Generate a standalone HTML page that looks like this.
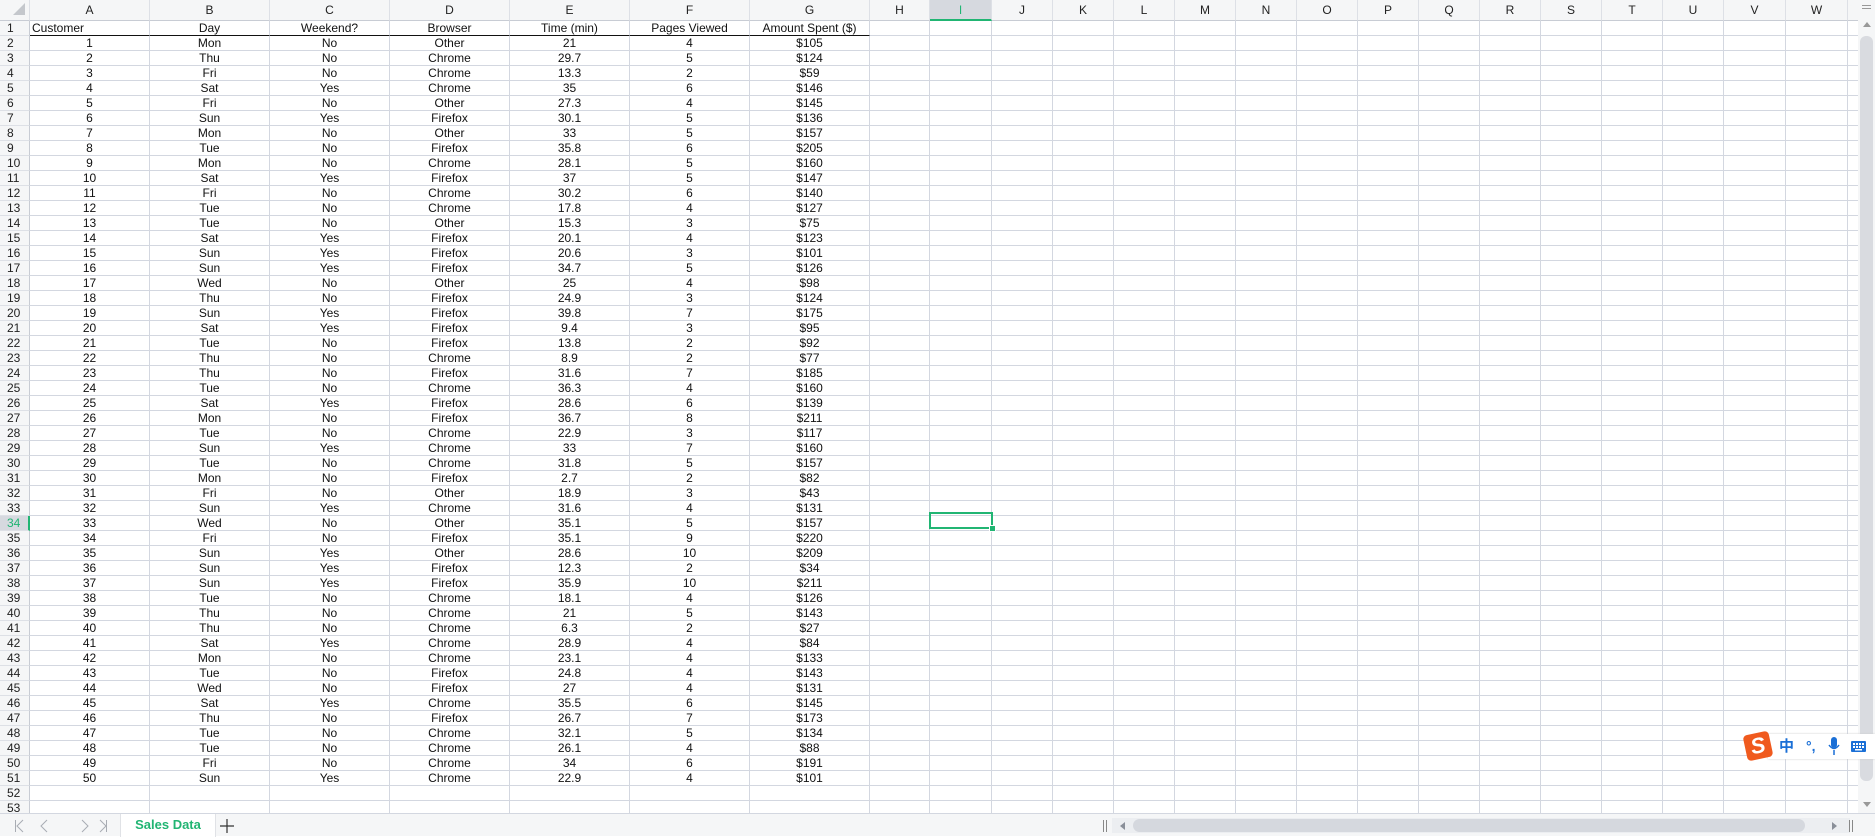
<!DOCTYPE html>
<html><head><meta charset="utf-8"><style>
*{margin:0;padding:0;box-sizing:border-box}
body{width:1875px;height:836px;overflow:hidden;background:#fff;font-family:"Liberation Sans",Arial,sans-serif;font-size:12px;color:#111;position:relative}
table{position:absolute;left:0;top:0;border-collapse:separate;border-spacing:0;table-layout:fixed;width:1858px}
td{height:15px;line-height:14px;border-right:1px solid #d3d7e0;border-bottom:1px solid #d3d7e0;text-align:center;white-space:nowrap;overflow:hidden;padding:0}
tr.h td{height:17px;line-height:16px;background:#f5f6f7;border-right:1px solid #dde0e6;border-bottom:1px solid #c8ccd4;color:#222}
td.r{background:#f5f6f7;text-align:left;padding-left:7px;border-right:1px solid #c8ccd4;border-bottom:1px solid #dde0e6;color:#222}
tr.one td{border-bottom:1px solid #111}
tr.one td.r,tr.one td.e{border-bottom:1px solid #d3d7e0}
tr.one td.r{border-bottom:1px solid #dde0e6}
td.l{text-align:left;padding-left:2px}
.sel{position:absolute;left:929px;top:512px;width:64px;height:17px;border:2px solid #21b573}
.sel:after{content:"";position:absolute;right:-5px;bottom:-5px;width:5px;height:5px;background:#21b573;border:1px solid #fff}
.tabbar{position:absolute;left:0;top:813px;width:1875px;height:23px;background:#f5f6f7;border-top:1px solid #d3d7e0}
.vs{position:absolute;left:1858px;top:0;width:17px;height:813px;background:#f5f6f7}
</style></head><body>
<table>
<colgroup><col style="width:30px"><col style="width:120px"><col style="width:120px"><col style="width:120px"><col style="width:120px"><col style="width:120px"><col style="width:120px"><col style="width:120px"><col style="width:60px"><col style="width:62px"><col style="width:61px"><col style="width:61px"><col style="width:61px"><col style="width:61px"><col style="width:61px"><col style="width:61px"><col style="width:61px"><col style="width:61px"><col style="width:61px"><col style="width:61px"><col style="width:61px"><col style="width:61px"><col style="width:62px"><col style="width:62px"><col style="width:12px"></colgroup>
<tr class="h"><td style="background:#f5f6f7"><svg width="14" height="14" style="margin:2px 0 0 8px"><path d="M13 1V13H1Z" fill="#c4c7cc"/></svg></td><td>A</td><td>B</td><td>C</td><td>D</td><td>E</td><td>F</td><td>G</td><td>H</td><td style="background:#d6d9df;color:#21b573;border-bottom:2px solid #21b573">I</td><td>J</td><td>K</td><td>L</td><td>M</td><td>N</td><td>O</td><td>P</td><td>Q</td><td>R</td><td>S</td><td>T</td><td>U</td><td>V</td><td>W</td><td></td></tr>
<tr class="one"><td class="r">1</td><td class="l">Customer</td><td>Day</td><td>Weekend?</td><td>Browser</td><td>Time (min)</td><td>Pages Viewed</td><td>Amount Spent ($)</td><td class="e"></td><td class="e"></td><td class="e"></td><td class="e"></td><td class="e"></td><td class="e"></td><td class="e"></td><td class="e"></td><td class="e"></td><td class="e"></td><td class="e"></td><td class="e"></td><td class="e"></td><td class="e"></td><td class="e"></td><td class="e"></td><td class="e"></td></tr>
<tr><td class="r">2</td><td>1</td><td>Mon</td><td>No</td><td>Other</td><td>21</td><td>4</td><td>$105</td><td></td><td></td><td></td><td></td><td></td><td></td><td></td><td></td><td></td><td></td><td></td><td></td><td></td><td></td><td></td><td></td><td></td></tr>
<tr><td class="r">3</td><td>2</td><td>Thu</td><td>No</td><td>Chrome</td><td>29.7</td><td>5</td><td>$124</td><td></td><td></td><td></td><td></td><td></td><td></td><td></td><td></td><td></td><td></td><td></td><td></td><td></td><td></td><td></td><td></td><td></td></tr>
<tr><td class="r">4</td><td>3</td><td>Fri</td><td>No</td><td>Chrome</td><td>13.3</td><td>2</td><td>$59</td><td></td><td></td><td></td><td></td><td></td><td></td><td></td><td></td><td></td><td></td><td></td><td></td><td></td><td></td><td></td><td></td><td></td></tr>
<tr><td class="r">5</td><td>4</td><td>Sat</td><td>Yes</td><td>Chrome</td><td>35</td><td>6</td><td>$146</td><td></td><td></td><td></td><td></td><td></td><td></td><td></td><td></td><td></td><td></td><td></td><td></td><td></td><td></td><td></td><td></td><td></td></tr>
<tr><td class="r">6</td><td>5</td><td>Fri</td><td>No</td><td>Other</td><td>27.3</td><td>4</td><td>$145</td><td></td><td></td><td></td><td></td><td></td><td></td><td></td><td></td><td></td><td></td><td></td><td></td><td></td><td></td><td></td><td></td><td></td></tr>
<tr><td class="r">7</td><td>6</td><td>Sun</td><td>Yes</td><td>Firefox</td><td>30.1</td><td>5</td><td>$136</td><td></td><td></td><td></td><td></td><td></td><td></td><td></td><td></td><td></td><td></td><td></td><td></td><td></td><td></td><td></td><td></td><td></td></tr>
<tr><td class="r">8</td><td>7</td><td>Mon</td><td>No</td><td>Other</td><td>33</td><td>5</td><td>$157</td><td></td><td></td><td></td><td></td><td></td><td></td><td></td><td></td><td></td><td></td><td></td><td></td><td></td><td></td><td></td><td></td><td></td></tr>
<tr><td class="r">9</td><td>8</td><td>Tue</td><td>No</td><td>Firefox</td><td>35.8</td><td>6</td><td>$205</td><td></td><td></td><td></td><td></td><td></td><td></td><td></td><td></td><td></td><td></td><td></td><td></td><td></td><td></td><td></td><td></td><td></td></tr>
<tr><td class="r">10</td><td>9</td><td>Mon</td><td>No</td><td>Chrome</td><td>28.1</td><td>5</td><td>$160</td><td></td><td></td><td></td><td></td><td></td><td></td><td></td><td></td><td></td><td></td><td></td><td></td><td></td><td></td><td></td><td></td><td></td></tr>
<tr><td class="r">11</td><td>10</td><td>Sat</td><td>Yes</td><td>Firefox</td><td>37</td><td>5</td><td>$147</td><td></td><td></td><td></td><td></td><td></td><td></td><td></td><td></td><td></td><td></td><td></td><td></td><td></td><td></td><td></td><td></td><td></td></tr>
<tr><td class="r">12</td><td>11</td><td>Fri</td><td>No</td><td>Chrome</td><td>30.2</td><td>6</td><td>$140</td><td></td><td></td><td></td><td></td><td></td><td></td><td></td><td></td><td></td><td></td><td></td><td></td><td></td><td></td><td></td><td></td><td></td></tr>
<tr><td class="r">13</td><td>12</td><td>Tue</td><td>No</td><td>Chrome</td><td>17.8</td><td>4</td><td>$127</td><td></td><td></td><td></td><td></td><td></td><td></td><td></td><td></td><td></td><td></td><td></td><td></td><td></td><td></td><td></td><td></td><td></td></tr>
<tr><td class="r">14</td><td>13</td><td>Tue</td><td>No</td><td>Other</td><td>15.3</td><td>3</td><td>$75</td><td></td><td></td><td></td><td></td><td></td><td></td><td></td><td></td><td></td><td></td><td></td><td></td><td></td><td></td><td></td><td></td><td></td></tr>
<tr><td class="r">15</td><td>14</td><td>Sat</td><td>Yes</td><td>Firefox</td><td>20.1</td><td>4</td><td>$123</td><td></td><td></td><td></td><td></td><td></td><td></td><td></td><td></td><td></td><td></td><td></td><td></td><td></td><td></td><td></td><td></td><td></td></tr>
<tr><td class="r">16</td><td>15</td><td>Sun</td><td>Yes</td><td>Firefox</td><td>20.6</td><td>3</td><td>$101</td><td></td><td></td><td></td><td></td><td></td><td></td><td></td><td></td><td></td><td></td><td></td><td></td><td></td><td></td><td></td><td></td><td></td></tr>
<tr><td class="r">17</td><td>16</td><td>Sun</td><td>Yes</td><td>Firefox</td><td>34.7</td><td>5</td><td>$126</td><td></td><td></td><td></td><td></td><td></td><td></td><td></td><td></td><td></td><td></td><td></td><td></td><td></td><td></td><td></td><td></td><td></td></tr>
<tr><td class="r">18</td><td>17</td><td>Wed</td><td>No</td><td>Other</td><td>25</td><td>4</td><td>$98</td><td></td><td></td><td></td><td></td><td></td><td></td><td></td><td></td><td></td><td></td><td></td><td></td><td></td><td></td><td></td><td></td><td></td></tr>
<tr><td class="r">19</td><td>18</td><td>Thu</td><td>No</td><td>Firefox</td><td>24.9</td><td>3</td><td>$124</td><td></td><td></td><td></td><td></td><td></td><td></td><td></td><td></td><td></td><td></td><td></td><td></td><td></td><td></td><td></td><td></td><td></td></tr>
<tr><td class="r">20</td><td>19</td><td>Sun</td><td>Yes</td><td>Firefox</td><td>39.8</td><td>7</td><td>$175</td><td></td><td></td><td></td><td></td><td></td><td></td><td></td><td></td><td></td><td></td><td></td><td></td><td></td><td></td><td></td><td></td><td></td></tr>
<tr><td class="r">21</td><td>20</td><td>Sat</td><td>Yes</td><td>Firefox</td><td>9.4</td><td>3</td><td>$95</td><td></td><td></td><td></td><td></td><td></td><td></td><td></td><td></td><td></td><td></td><td></td><td></td><td></td><td></td><td></td><td></td><td></td></tr>
<tr><td class="r">22</td><td>21</td><td>Tue</td><td>No</td><td>Firefox</td><td>13.8</td><td>2</td><td>$92</td><td></td><td></td><td></td><td></td><td></td><td></td><td></td><td></td><td></td><td></td><td></td><td></td><td></td><td></td><td></td><td></td><td></td></tr>
<tr><td class="r">23</td><td>22</td><td>Thu</td><td>No</td><td>Chrome</td><td>8.9</td><td>2</td><td>$77</td><td></td><td></td><td></td><td></td><td></td><td></td><td></td><td></td><td></td><td></td><td></td><td></td><td></td><td></td><td></td><td></td><td></td></tr>
<tr><td class="r">24</td><td>23</td><td>Thu</td><td>No</td><td>Firefox</td><td>31.6</td><td>7</td><td>$185</td><td></td><td></td><td></td><td></td><td></td><td></td><td></td><td></td><td></td><td></td><td></td><td></td><td></td><td></td><td></td><td></td><td></td></tr>
<tr><td class="r">25</td><td>24</td><td>Tue</td><td>No</td><td>Chrome</td><td>36.3</td><td>4</td><td>$160</td><td></td><td></td><td></td><td></td><td></td><td></td><td></td><td></td><td></td><td></td><td></td><td></td><td></td><td></td><td></td><td></td><td></td></tr>
<tr><td class="r">26</td><td>25</td><td>Sat</td><td>Yes</td><td>Firefox</td><td>28.6</td><td>6</td><td>$139</td><td></td><td></td><td></td><td></td><td></td><td></td><td></td><td></td><td></td><td></td><td></td><td></td><td></td><td></td><td></td><td></td><td></td></tr>
<tr><td class="r">27</td><td>26</td><td>Mon</td><td>No</td><td>Firefox</td><td>36.7</td><td>8</td><td>$211</td><td></td><td></td><td></td><td></td><td></td><td></td><td></td><td></td><td></td><td></td><td></td><td></td><td></td><td></td><td></td><td></td><td></td></tr>
<tr><td class="r">28</td><td>27</td><td>Tue</td><td>No</td><td>Chrome</td><td>22.9</td><td>3</td><td>$117</td><td></td><td></td><td></td><td></td><td></td><td></td><td></td><td></td><td></td><td></td><td></td><td></td><td></td><td></td><td></td><td></td><td></td></tr>
<tr><td class="r">29</td><td>28</td><td>Sun</td><td>Yes</td><td>Chrome</td><td>33</td><td>7</td><td>$160</td><td></td><td></td><td></td><td></td><td></td><td></td><td></td><td></td><td></td><td></td><td></td><td></td><td></td><td></td><td></td><td></td><td></td></tr>
<tr><td class="r">30</td><td>29</td><td>Tue</td><td>No</td><td>Chrome</td><td>31.8</td><td>5</td><td>$157</td><td></td><td></td><td></td><td></td><td></td><td></td><td></td><td></td><td></td><td></td><td></td><td></td><td></td><td></td><td></td><td></td><td></td></tr>
<tr><td class="r">31</td><td>30</td><td>Mon</td><td>No</td><td>Firefox</td><td>2.7</td><td>2</td><td>$82</td><td></td><td></td><td></td><td></td><td></td><td></td><td></td><td></td><td></td><td></td><td></td><td></td><td></td><td></td><td></td><td></td><td></td></tr>
<tr><td class="r">32</td><td>31</td><td>Fri</td><td>No</td><td>Other</td><td>18.9</td><td>3</td><td>$43</td><td></td><td></td><td></td><td></td><td></td><td></td><td></td><td></td><td></td><td></td><td></td><td></td><td></td><td></td><td></td><td></td><td></td></tr>
<tr><td class="r">33</td><td>32</td><td>Sun</td><td>Yes</td><td>Chrome</td><td>31.6</td><td>4</td><td>$131</td><td></td><td></td><td></td><td></td><td></td><td></td><td></td><td></td><td></td><td></td><td></td><td></td><td></td><td></td><td></td><td></td><td></td></tr>
<tr><td class="r" style="background:#d6d9df;color:#21b573;border-right:2px solid #21b573">34</td><td>33</td><td>Wed</td><td>No</td><td>Other</td><td>35.1</td><td>5</td><td>$157</td><td></td><td></td><td></td><td></td><td></td><td></td><td></td><td></td><td></td><td></td><td></td><td></td><td></td><td></td><td></td><td></td><td></td></tr>
<tr><td class="r">35</td><td>34</td><td>Fri</td><td>No</td><td>Firefox</td><td>35.1</td><td>9</td><td>$220</td><td></td><td></td><td></td><td></td><td></td><td></td><td></td><td></td><td></td><td></td><td></td><td></td><td></td><td></td><td></td><td></td><td></td></tr>
<tr><td class="r">36</td><td>35</td><td>Sun</td><td>Yes</td><td>Other</td><td>28.6</td><td>10</td><td>$209</td><td></td><td></td><td></td><td></td><td></td><td></td><td></td><td></td><td></td><td></td><td></td><td></td><td></td><td></td><td></td><td></td><td></td></tr>
<tr><td class="r">37</td><td>36</td><td>Sun</td><td>Yes</td><td>Firefox</td><td>12.3</td><td>2</td><td>$34</td><td></td><td></td><td></td><td></td><td></td><td></td><td></td><td></td><td></td><td></td><td></td><td></td><td></td><td></td><td></td><td></td><td></td></tr>
<tr><td class="r">38</td><td>37</td><td>Sun</td><td>Yes</td><td>Firefox</td><td>35.9</td><td>10</td><td>$211</td><td></td><td></td><td></td><td></td><td></td><td></td><td></td><td></td><td></td><td></td><td></td><td></td><td></td><td></td><td></td><td></td><td></td></tr>
<tr><td class="r">39</td><td>38</td><td>Tue</td><td>No</td><td>Chrome</td><td>18.1</td><td>4</td><td>$126</td><td></td><td></td><td></td><td></td><td></td><td></td><td></td><td></td><td></td><td></td><td></td><td></td><td></td><td></td><td></td><td></td><td></td></tr>
<tr><td class="r">40</td><td>39</td><td>Thu</td><td>No</td><td>Chrome</td><td>21</td><td>5</td><td>$143</td><td></td><td></td><td></td><td></td><td></td><td></td><td></td><td></td><td></td><td></td><td></td><td></td><td></td><td></td><td></td><td></td><td></td></tr>
<tr><td class="r">41</td><td>40</td><td>Thu</td><td>No</td><td>Chrome</td><td>6.3</td><td>2</td><td>$27</td><td></td><td></td><td></td><td></td><td></td><td></td><td></td><td></td><td></td><td></td><td></td><td></td><td></td><td></td><td></td><td></td><td></td></tr>
<tr><td class="r">42</td><td>41</td><td>Sat</td><td>Yes</td><td>Chrome</td><td>28.9</td><td>4</td><td>$84</td><td></td><td></td><td></td><td></td><td></td><td></td><td></td><td></td><td></td><td></td><td></td><td></td><td></td><td></td><td></td><td></td><td></td></tr>
<tr><td class="r">43</td><td>42</td><td>Mon</td><td>No</td><td>Chrome</td><td>23.1</td><td>4</td><td>$133</td><td></td><td></td><td></td><td></td><td></td><td></td><td></td><td></td><td></td><td></td><td></td><td></td><td></td><td></td><td></td><td></td><td></td></tr>
<tr><td class="r">44</td><td>43</td><td>Tue</td><td>No</td><td>Firefox</td><td>24.8</td><td>4</td><td>$143</td><td></td><td></td><td></td><td></td><td></td><td></td><td></td><td></td><td></td><td></td><td></td><td></td><td></td><td></td><td></td><td></td><td></td></tr>
<tr><td class="r">45</td><td>44</td><td>Wed</td><td>No</td><td>Firefox</td><td>27</td><td>4</td><td>$131</td><td></td><td></td><td></td><td></td><td></td><td></td><td></td><td></td><td></td><td></td><td></td><td></td><td></td><td></td><td></td><td></td><td></td></tr>
<tr><td class="r">46</td><td>45</td><td>Sat</td><td>Yes</td><td>Chrome</td><td>35.5</td><td>6</td><td>$145</td><td></td><td></td><td></td><td></td><td></td><td></td><td></td><td></td><td></td><td></td><td></td><td></td><td></td><td></td><td></td><td></td><td></td></tr>
<tr><td class="r">47</td><td>46</td><td>Thu</td><td>No</td><td>Firefox</td><td>26.7</td><td>7</td><td>$173</td><td></td><td></td><td></td><td></td><td></td><td></td><td></td><td></td><td></td><td></td><td></td><td></td><td></td><td></td><td></td><td></td><td></td></tr>
<tr><td class="r">48</td><td>47</td><td>Tue</td><td>No</td><td>Chrome</td><td>32.1</td><td>5</td><td>$134</td><td></td><td></td><td></td><td></td><td></td><td></td><td></td><td></td><td></td><td></td><td></td><td></td><td></td><td></td><td></td><td></td><td></td></tr>
<tr><td class="r">49</td><td>48</td><td>Tue</td><td>No</td><td>Chrome</td><td>26.1</td><td>4</td><td>$88</td><td></td><td></td><td></td><td></td><td></td><td></td><td></td><td></td><td></td><td></td><td></td><td></td><td></td><td></td><td></td><td></td><td></td></tr>
<tr><td class="r">50</td><td>49</td><td>Fri</td><td>No</td><td>Chrome</td><td>34</td><td>6</td><td>$191</td><td></td><td></td><td></td><td></td><td></td><td></td><td></td><td></td><td></td><td></td><td></td><td></td><td></td><td></td><td></td><td></td><td></td></tr>
<tr><td class="r">51</td><td>50</td><td>Sun</td><td>Yes</td><td>Chrome</td><td>22.9</td><td>4</td><td>$101</td><td></td><td></td><td></td><td></td><td></td><td></td><td></td><td></td><td></td><td></td><td></td><td></td><td></td><td></td><td></td><td></td><td></td></tr>
<tr><td class="r">52</td><td></td><td></td><td></td><td></td><td></td><td></td><td></td><td></td><td></td><td></td><td></td><td></td><td></td><td></td><td></td><td></td><td></td><td></td><td></td><td></td><td></td><td></td><td></td><td></td></tr>
<tr><td class="r">53</td><td></td><td></td><td></td><td></td><td></td><td></td><td></td><td></td><td></td><td></td><td></td><td></td><td></td><td></td><td></td><td></td><td></td><td></td><td></td><td></td><td></td><td></td><td></td><td></td></tr>
</table>
<div class="sel"></div>
<div class="vs">
<div style="position:absolute;left:4px;top:5px;width:9px;height:1px;background:#999"></div>
<div style="position:absolute;left:4px;top:8px;width:9px;height:1px;background:#999"></div>
<svg style="position:absolute;left:5px;top:22px" width="8" height="5"><path d="M0 5L4 0L8 5Z" fill="#999"/></svg>
<div style="position:absolute;left:2px;top:36px;width:13px;height:745px;background:#d9dbe0;border-radius:6px"></div>
<svg style="position:absolute;left:5px;top:802px" width="8" height="5"><path d="M0 0L4 5L8 0Z" fill="#999"/></svg>
</div>
<div class="tabbar">
<svg style="position:absolute;left:14px;top:5px" width="95" height="14" stroke="#a8acb3" stroke-width="1" fill="none"><path d="M1.5 1V13M9 1L3 7L9 13"/><path d="M33 1L27 7L33 13"/><path d="M68 1L74 7L68 13"/><path d="M92.5 1V13M86 1L92 7L86 13"/></svg>
<div style="position:absolute;left:120px;top:0;width:96px;height:23px;background:#fff;border-left:1px solid #e0e2e6;border-right:1px solid #e0e2e6;color:#21b573;font-weight:bold;font-size:13px;line-height:22px;text-align:center">Sales Data</div>
<svg style="position:absolute;left:220px;top:5px" width="14" height="14" stroke="#333" stroke-width="1.2"><path d="M7 0V14M0 7H14"/></svg>
<div style="position:absolute;left:1103px;top:6px;width:1px;height:12px;background:#888"></div>
<div style="position:absolute;left:1106px;top:6px;width:1px;height:12px;background:#888"></div>
<div style="position:absolute;left:1112px;top:4px;width:738px;height:15px;background:#eceef1"></div>
<svg style="position:absolute;left:1120px;top:8px" width="5" height="8"><path d="M5 0L0 4L5 8Z" fill="#8a8f99"/></svg>
<div style="position:absolute;left:1133px;top:5px;width:672px;height:13px;background:#d5d8de;border-radius:7px"></div>
<svg style="position:absolute;left:1832px;top:8px" width="5" height="8"><path d="M0 0L5 4L0 8Z" fill="#8a8f99"/></svg>
<div style="position:absolute;left:1849px;top:6px;width:1px;height:12px;background:#888"></div>
<div style="position:absolute;left:1852px;top:6px;width:1px;height:12px;background:#888"></div>
</div>
<div style="position:absolute;left:1768px;top:734px;width:107px;height:25px;background:#fff;box-shadow:0 0 2px #ccc"></div>
<div style="position:absolute;left:1745px;top:733px;width:26px;height:26px;background:#f05a1e;border-radius:4px;transform:rotate(-12deg);color:#fff;font-weight:bold;font-size:22px;line-height:26px;text-align:center;font-style:italic">S</div>
<div style="position:absolute;left:1779px;top:736px;color:#1a6fd6;font-weight:bold;font-size:15px;font-family:'Noto Sans CJK SC',sans-serif;line-height:20px">中</div>
<div style="position:absolute;left:1806px;top:736px;color:#1a6fd6;font-weight:bold;font-size:14px;line-height:20px">°,</div>
<svg style="position:absolute;left:1828px;top:737px" width="12" height="19"><rect x="3" y="0" width="6" height="11" rx="3" fill="#1a6fd6"/><path d="M1 8Q6 15 11 8M6 13V18" stroke="#1a6fd6" stroke-width="1.5" fill="none"/></svg>
<svg style="position:absolute;left:1851px;top:741px" width="15" height="11"><rect width="15" height="11" rx="1" fill="#1a6fd6"/><g fill="#fff"><rect x="2" y="2" width="2" height="2"/><rect x="5" y="2" width="2" height="2"/><rect x="8" y="2" width="2" height="2"/><rect x="11" y="2" width="2" height="2"/><rect x="2" y="5" width="2" height="2"/><rect x="5" y="5" width="2" height="2"/><rect x="8" y="5" width="2" height="2"/><rect x="11" y="5" width="2" height="2"/><rect x="4" y="8" width="7" height="1.5"/></g></svg>
</body></html>
